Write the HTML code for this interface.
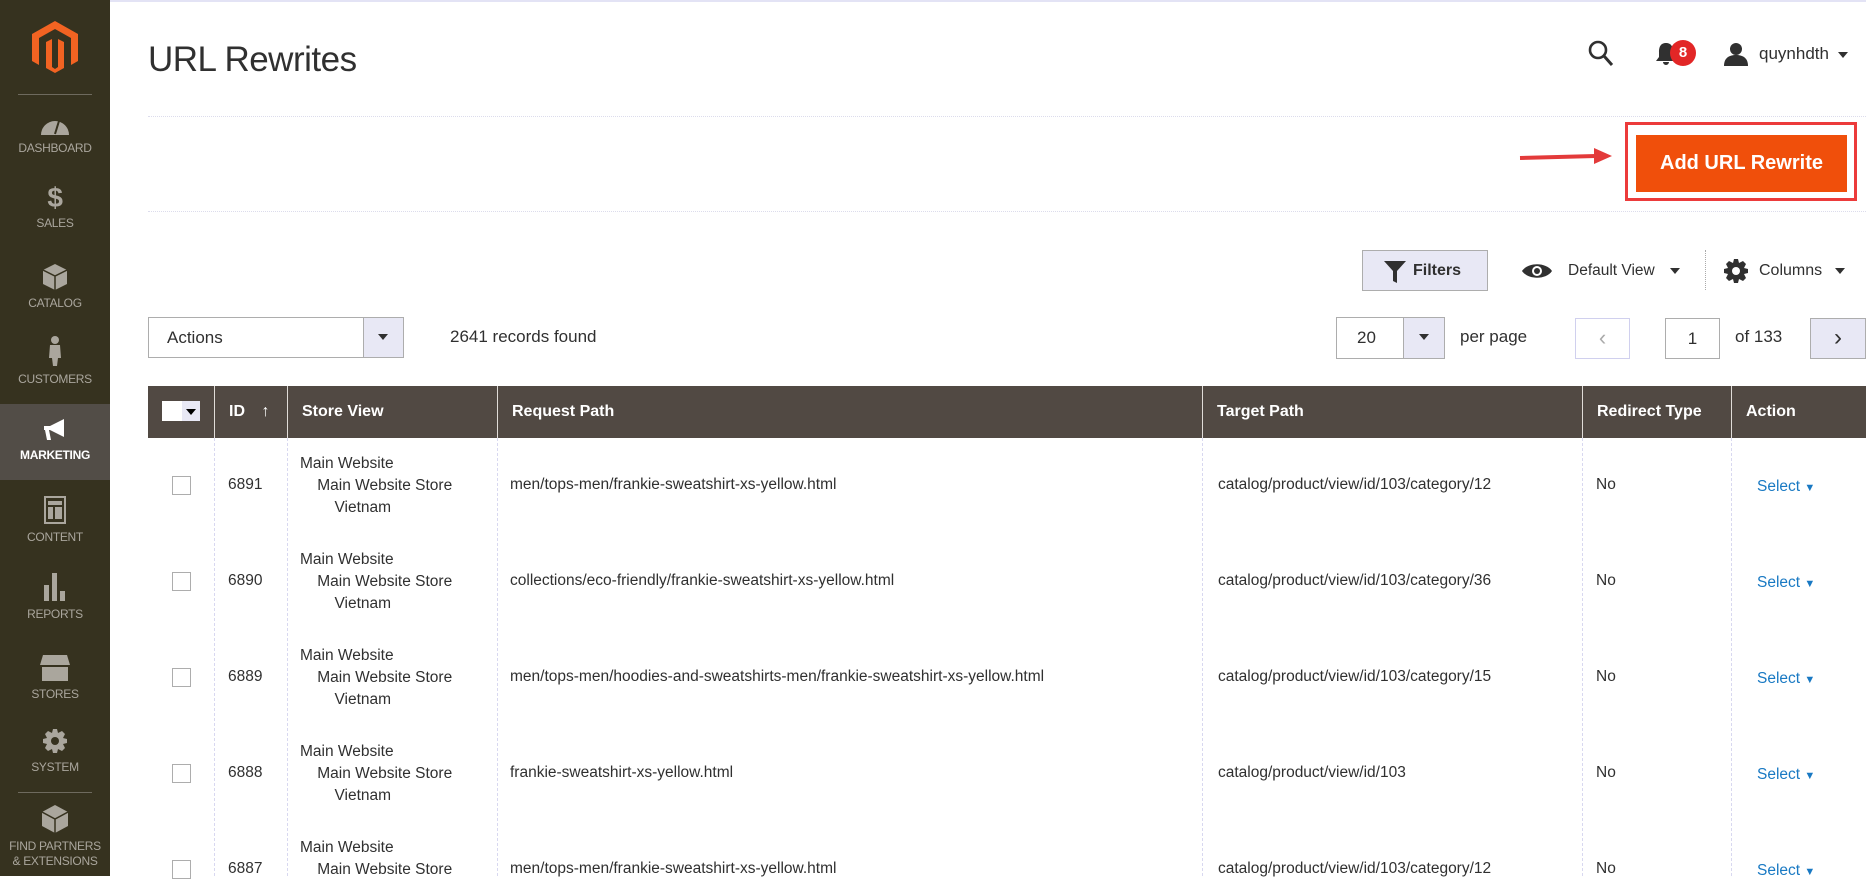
<!DOCTYPE html>
<html><head><meta charset="utf-8">
<style>
*{box-sizing:border-box;margin:0;padding:0}
body{width:1866px;height:876px;overflow:hidden;background:#fff;font-family:"Liberation Sans",sans-serif;color:#303030;position:relative}
.abs{position:absolute}
#side{left:0;top:0;width:110px;height:876px;background:#36321f}
.nav{position:absolute;left:0;width:110px;text-align:center;color:#aaa69d;font-size:12px;letter-spacing:-0.3px}
.nav svg{display:block;margin:0 auto 6px}
.dots{height:0;border-top:1px dotted #dcdcec}
.hd{position:absolute;top:386px;height:52px;color:#fff;font-weight:bold;font-size:16px;line-height:52px;padding-left:14px;border-left:1px solid #e0dcd8}
.vl{position:absolute;top:438px;height:438px;border-left:1px dashed #d8d8f0}
.cell{position:absolute;font-size:15.5px;color:#303030}
.cb{position:absolute;left:172px;width:19px;height:19px;border:1px solid #adadad;background:#fff}
.sel{position:absolute;left:1757px;color:#1979c3;font-size:15.5px}
</style></head><body>
<div class="abs" style="left:110px;top:0;width:1756px;height:2px;background:#e3e3f5"></div>

<div id="side" class="abs">
 <svg class="abs" style="left:32px;top:21px" width="46" height="52" viewBox="0 0 46 52"><path d="M23 0 L46 13 V40 L39 44 V17 L23 8 L7 17 V44 L0 40 V13 Z M14 21 L20 18 V46 L23 48 L26 46 V18 L32 21 V47 L23 52 L14 47 Z" fill="#f26322"/></svg>
 <div class="abs" style="left:18px;top:94px;width:74px;height:1px;background:#6e6a5e"></div>
 <div class="nav" style="top:113px"><svg width="28" height="22" viewBox="0 0 28 22"><path d="M0 22 A14 14 0 0 1 28 22 Z" fill="#aaa69d"/><path d="M14 21 L18 8" stroke="#36321f" stroke-width="2"/></svg>DASHBOARD</div>
 <div class="nav" style="top:184px"><div style="font-size:28px;font-weight:bold;line-height:28px;margin-bottom:4px">$</div>SALES</div>
 <div class="nav" style="top:264px"><svg width="24" height="26" viewBox="0 0 24 26"><path d="M12 0 L24 6 V20 L12 26 L0 20 V6 Z" fill="#aaa69d"/><path d="M0 6 L12 12 L24 6 M12 12 V26" stroke="#36321f" stroke-width="1.5" fill="none"/></svg>CATALOG</div>
 <div class="nav" style="top:336px"><svg width="16" height="30" viewBox="0 0 16 30"><circle cx="8" cy="4" r="4" fill="#aaa69d"/><path d="M3 9 H13 L14 22 H11 L10 30 H6 L5 22 H2 Z" fill="#aaa69d"/></svg>CUSTOMERS</div>
 <div class="abs" style="left:0;top:404px;width:110px;height:76px;background:#524d47"></div>
 <div class="nav" style="top:418px;color:#fff;font-weight:bold"><svg width="26" height="24" viewBox="0 0 26 24"><path d="M2 8 H8 L22 1 V19 L8 12 H7 L9 22 H5 L3 12 H2 Z" fill="#fff"/></svg>MARKETING</div>
 <div class="nav" style="top:496px"><svg width="22" height="28" viewBox="0 0 22 28"><rect x="1" y="1" width="20" height="26" fill="none" stroke="#aaa69d" stroke-width="2"/><rect x="4" y="5" width="14" height="4" fill="#aaa69d"/><rect x="4" y="11" width="5" height="12" fill="#aaa69d"/><rect x="11" y="11" width="7" height="12" fill="#aaa69d"/></svg>CONTENT</div>
 <div class="nav" style="top:573px"><svg width="22" height="28" viewBox="0 0 22 28"><rect x="0" y="12" width="5" height="16" fill="#aaa69d"/><rect x="8" y="0" width="5" height="28" fill="#aaa69d"/><rect x="16" y="18" width="5" height="10" fill="#aaa69d"/></svg>REPORTS</div>
 <div class="nav" style="top:655px"><svg width="30" height="26" viewBox="0 0 30 26"><path d="M3 0 H27 L30 10 H0 Z" fill="#aaa69d"/><rect x="2" y="12" width="26" height="14" fill="#aaa69d"/></svg>STORES</div>
 <div class="nav" style="top:728px"><svg width="24" height="26" viewBox="0 0 24 24"><path d="M10 0 H14 L15 4 L19 2 L22 5 L20 9 L24 10 V14 L20 15 L22 19 L19 22 L15 20 L14 24 H10 L9 20 L5 22 L2 19 L4 15 L0 14 V10 L4 9 L2 5 L5 2 L9 4 Z" fill="#aaa69d"/><circle cx="12" cy="12" r="4" fill="#36321f"/></svg>SYSTEM</div>
 <div class="abs" style="left:18px;top:792px;width:74px;height:1px;background:#6e6a5e"></div>
 <div class="nav" style="top:805px;line-height:15px"><svg width="26" height="28" viewBox="0 0 26 28"><path d="M13 0 L26 7 V21 L13 28 L0 21 V7 Z" fill="#aaa69d"/><path d="M0 7 L13 14 L26 7 M13 14 V28" stroke="#36321f" stroke-width="1.5" fill="none"/></svg>FIND PARTNERS<br>&amp; EXTENSIONS</div>
</div>

<div class="abs" style="left:148px;top:40px;font-size:35px;color:#303030;letter-spacing:-0.5px">URL Rewrites</div>
<svg class="abs" style="left:1588px;top:40px" width="26" height="28" viewBox="0 0 26 28"><circle cx="10" cy="10" r="8" fill="none" stroke="#303030" stroke-width="2.6"/><path d="M16 16 L24 25" stroke="#303030" stroke-width="3"/></svg>
<svg class="abs" style="left:1655px;top:42px" width="22" height="24" viewBox="0 0 22 24"><path d="M11 1 C5 1 4 6 4 10 V15 L1 19 H21 L18 15 V10 C18 6 17 1 11 1 Z M8 20 A3 3 0 0 0 14 20 Z" fill="#303030"/></svg>
<div class="abs" style="left:1670px;top:40px;width:26px;height:26px;border-radius:13px;background:#e22626;color:#fff;font-weight:bold;font-size:15px;text-align:center;line-height:26px">8</div>
<svg class="abs" style="left:1724px;top:42px" width="24" height="24" viewBox="0 0 24 24"><circle cx="12" cy="7" r="6" fill="#303030"/><path d="M0 24 C0 16 5 13 12 13 C19 13 24 16 24 24 Z" fill="#303030"/></svg>
<div class="abs" style="left:1759px;top:44px;font-size:17px;color:#303030">quynhdth</div>
<div class="abs" style="left:1838px;top:52px;border:5px solid transparent;border-top:6px solid #303030"></div>

<div class="abs dots" style="left:148px;top:116px;width:1718px"></div>
<div class="abs dots" style="left:148px;top:211px;width:1718px"></div>

<svg class="abs" style="left:1518px;top:146px" width="96" height="20" viewBox="0 0 96 20"><path d="M2 12 L78 10" stroke="#e33a3a" stroke-width="4"/><path d="M76 2 L94 10 L76 18 Z" fill="#e33a3a"/></svg>
<div class="abs" style="left:1625px;top:122px;width:232px;height:79px;border:3px solid #ec3b3b"></div>
<div class="abs" style="left:1636px;top:135px;width:211px;height:57px;background:#f04f0b;color:#fff;font-weight:bold;font-size:20px;text-align:center;line-height:57px">Add URL Rewrite</div>

<div class="abs" style="left:1362px;top:250px;width:126px;height:41px;background:#e8e8f5;border:1px solid #adadad;font-size:16px;font-weight:bold;line-height:39px;padding-left:50px;color:#303030">Filters</div>
<svg class="abs" style="left:1384px;top:261px" width="22" height="22" viewBox="0 0 22 22"><path d="M0 0 H22 L13 10 V22 L9 20 V10 Z" fill="#303030"/></svg>
<svg class="abs" style="left:1522px;top:262px" width="30" height="18" viewBox="0 0 30 18"><path d="M0 9 C6 0 24 0 30 9 C24 18 6 18 0 9 Z" fill="#303030"/><circle cx="15" cy="9" r="5" fill="#fff"/><circle cx="15" cy="9" r="3" fill="#303030"/></svg>
<div class="abs" style="left:1568px;top:262px;font-size:15.5px;color:#303030">Default View</div>
<div class="abs" style="left:1670px;top:268px;border:5px solid transparent;border-top:6px solid #303030"></div>
<div class="abs" style="left:1705px;top:250px;height:40px;border-left:1px dotted #aaa"></div>
<svg class="abs" style="left:1724px;top:259px" width="24" height="24" viewBox="0 0 24 24"><path d="M10 0 H14 L15 4 L19 2 L22 5 L20 9 L24 10 V14 L20 15 L22 19 L19 22 L15 20 L14 24 H10 L9 20 L5 22 L2 19 L4 15 L0 14 V10 L4 9 L2 5 L5 2 L9 4 Z" fill="#303030"/><circle cx="12" cy="12" r="4" fill="#fff"/></svg>
<div class="abs" style="left:1759px;top:262px;font-size:16px;color:#303030">Columns</div>
<div class="abs" style="left:1835px;top:268px;border:5px solid transparent;border-top:6px solid #303030"></div>

<div class="abs" style="left:148px;top:317px;width:256px;height:41px;border:1px solid #adadad;font-size:17px;line-height:39px;padding-left:18px">Actions</div>
<div class="abs" style="left:363px;top:318px;width:40px;height:39px;background:#e8e8f5;border-left:1px solid #adadad"></div>
<div class="abs" style="left:378px;top:334px;border:5px solid transparent;border-top:6px solid #303030"></div>
<div class="abs" style="left:450px;top:327px;font-size:17px">2641 records found</div>

<div class="abs" style="left:1336px;top:317px;width:109px;height:42px;border:1px solid #adadad;font-size:17px;line-height:40px;padding-left:20px">20</div>
<div class="abs" style="left:1403px;top:318px;width:41px;height:40px;background:#e8e8f5;border-left:1px solid #adadad"></div>
<div class="abs" style="left:1419px;top:334px;border:5px solid transparent;border-top:6px solid #303030"></div>
<div class="abs" style="left:1460px;top:327px;font-size:17px">per page</div>
<div class="abs" style="left:1575px;top:318px;width:55px;height:41px;border:1px solid #d0d0ee;color:#aaa;font-size:22px;text-align:center;line-height:38px">‹</div>
<div class="abs" style="left:1665px;top:318px;width:55px;height:41px;border:1px solid #adadad;font-size:17px;text-align:center;line-height:39px">1</div>
<div class="abs" style="left:1735px;top:327px;font-size:17px">of 133</div>
<div class="abs" style="left:1810px;top:318px;width:56px;height:41px;border:1px solid #adadad;background:#e8e8f5;color:#303030;font-size:24px;text-align:center;line-height:37px">›</div>

<div class="abs" style="left:148px;top:386px;width:1718px;height:52px;background:#514943"></div>
<div class="abs" style="left:162px;top:401px;width:20px;height:20px;background:#fff"></div>
<div class="abs" style="left:182px;top:401px;width:18px;height:20px;background:#e8e8f5"></div>
<div class="abs" style="left:186px;top:409px;border:5px solid transparent;border-top:6px solid #000"></div>
<div class="hd" style="left:214px;width:73px">ID <span style="font-weight:normal;margin-left:12px">↑</span></div>
<div class="hd" style="left:287px;width:210px">Store View</div>
<div class="hd" style="left:497px;width:705px">Request Path</div>
<div class="hd" style="left:1202px;width:380px">Target Path</div>
<div class="hd" style="left:1582px;width:149px">Redirect Type</div>
<div class="hd" style="left:1731px;width:135px">Action</div>

<div class="vl" style="left:214px"></div><div class="vl" style="left:287px"></div><div class="vl" style="left:497px"></div><div class="vl" style="left:1202px"></div><div class="vl" style="left:1582px"></div><div class="vl" style="left:1731px"></div>

<div class="cb" style="top:476px"></div><div class="cell" style="left:228px;top:476px">6891</div>
<div class="cell" style="left:300px;top:453px;line-height:22px">Main Website<br>&nbsp;&nbsp;&nbsp;&nbsp;Main Website Store<br>&nbsp;&nbsp;&nbsp;&nbsp;&nbsp;&nbsp;&nbsp;&nbsp;Vietnam</div>
<div class="cell" style="left:510px;top:476px">men/tops-men/frankie-sweatshirt-xs-yellow.html</div>
<div class="cell" style="left:1218px;top:476px">catalog/product/view/id/103/category/12</div>
<div class="cell" style="left:1596px;top:476px">No</div>
<div class="sel" style="top:478px">Select <span style="font-size:11px">▼</span></div>

<div class="cb" style="top:572px"></div><div class="cell" style="left:228px;top:572px">6890</div>
<div class="cell" style="left:300px;top:549px;line-height:22px">Main Website<br>&nbsp;&nbsp;&nbsp;&nbsp;Main Website Store<br>&nbsp;&nbsp;&nbsp;&nbsp;&nbsp;&nbsp;&nbsp;&nbsp;Vietnam</div>
<div class="cell" style="left:510px;top:572px">collections/eco-friendly/frankie-sweatshirt-xs-yellow.html</div>
<div class="cell" style="left:1218px;top:572px">catalog/product/view/id/103/category/36</div>
<div class="cell" style="left:1596px;top:572px">No</div>
<div class="sel" style="top:574px">Select <span style="font-size:11px">▼</span></div>

<div class="cb" style="top:668px"></div><div class="cell" style="left:228px;top:668px">6889</div>
<div class="cell" style="left:300px;top:645px;line-height:22px">Main Website<br>&nbsp;&nbsp;&nbsp;&nbsp;Main Website Store<br>&nbsp;&nbsp;&nbsp;&nbsp;&nbsp;&nbsp;&nbsp;&nbsp;Vietnam</div>
<div class="cell" style="left:510px;top:668px">men/tops-men/hoodies-and-sweatshirts-men/frankie-sweatshirt-xs-yellow.html</div>
<div class="cell" style="left:1218px;top:668px">catalog/product/view/id/103/category/15</div>
<div class="cell" style="left:1596px;top:668px">No</div>
<div class="sel" style="top:670px">Select <span style="font-size:11px">▼</span></div>

<div class="cb" style="top:764px"></div><div class="cell" style="left:228px;top:764px">6888</div>
<div class="cell" style="left:300px;top:741px;line-height:22px">Main Website<br>&nbsp;&nbsp;&nbsp;&nbsp;Main Website Store<br>&nbsp;&nbsp;&nbsp;&nbsp;&nbsp;&nbsp;&nbsp;&nbsp;Vietnam</div>
<div class="cell" style="left:510px;top:764px">frankie-sweatshirt-xs-yellow.html</div>
<div class="cell" style="left:1218px;top:764px">catalog/product/view/id/103</div>
<div class="cell" style="left:1596px;top:764px">No</div>
<div class="sel" style="top:766px">Select <span style="font-size:11px">▼</span></div>

<div class="cb" style="top:860px"></div><div class="cell" style="left:228px;top:860px">6887</div>
<div class="cell" style="left:300px;top:837px;line-height:22px">Main Website<br>&nbsp;&nbsp;&nbsp;&nbsp;Main Website Store</div>
<div class="cell" style="left:510px;top:860px">men/tops-men/frankie-sweatshirt-xs-yellow.html</div>
<div class="cell" style="left:1218px;top:860px">catalog/product/view/id/103/category/12</div>
<div class="cell" style="left:1596px;top:860px">No</div>
<div class="sel" style="top:862px">Select <span style="font-size:11px">▼</span></div>
</body></html>
